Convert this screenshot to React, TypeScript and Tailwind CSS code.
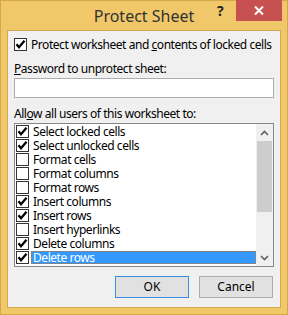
const items: [string, boolean][] = [
  ["Select locked cells", true],
  ["Select unlocked cells", true],
  ["Format cells", false],
  ["Format columns", false],
  ["Format rows", false],
  ["Insert columns", true],
  ["Insert rows", true],
  ["Insert hyperlinks", false],
  ["Delete columns", true],
  ["Delete rows", true],
];

function Check({ checked }: { checked: boolean }) {
  return (
    <span className="flex h-[13px] w-[13px] shrink-0 items-center justify-center border border-[#333333] bg-white">
      {checked ? (
        <svg width="11" height="11" viewBox="0 0 11 11">
          <path d="M1.5 5.3 L4 8.3 L9.5 1.8" fill="none" stroke="#000" strokeWidth="2.3" />
        </svg>
      ) : null}
    </span>
  );
}

function Chevron({ up }: { up?: boolean }) {
  return (
    <svg width="9" height="6" viewBox="0 0 9 6">
      <path
        d={up ? "M1 5 L4.5 1.5 L8 5" : "M1 1 L4.5 4.5 L8 1"}
        fill="none"
        stroke="#606060"
        strokeWidth="1.6"
      />
    </svg>
  );
}

export default function App() {
  return (
    <div className="flex h-[315px] w-[288px] flex-col border border-[#d6a747] bg-[#f0c86a] font-['Segoe_UI','Noto_Sans',sans-serif] text-[12px] tracking-[-0.45px] text-black">
      <div className="relative flex h-[29px] shrink-0 items-center justify-center">
        <span className="text-[16px] leading-none tracking-normal text-[#333333]">Protect Sheet</span>
        <span className="absolute left-[216px] top-[3px] text-[14px] font-bold leading-[14px] text-[#222]">?</span>
        <div className="absolute right-[5px] top-[-1px] flex h-[21px] w-[46px] items-center justify-center bg-[#c75050]">
          <svg width="10" height="9" viewBox="0 0 10 9">
            <path d="M1 0.5 L9 8.5 M9 0.5 L1 8.5" stroke="#fff" strokeWidth="2" />
          </svg>
        </div>
      </div>
      <div className="mx-[6px] mb-[6px] flex flex-1 flex-col border border-[#d3a950] bg-[#f0f0f0] pl-[6px] pr-[6px]">
        <div className="mt-[7px] flex h-[13px] items-center gap-[4px]">
          <Check checked />
          <span className="whitespace-nowrap leading-[15px]">
            Protect worksheet and <u>c</u>ontents of locked cells
          </span>
        </div>
        <div className="mt-[10px] whitespace-nowrap leading-[15px]">
          <u>P</u>assword to unprotect sheet:
        </div>
        <div className="mt-[2px] h-[20px] w-[260px] border border-[#abadb3] bg-white" />
        <div className="mt-[8px] whitespace-nowrap leading-[15px]">
          All<u>o</u>w all users of this worksheet to:
        </div>
        <div className="mt-[2px] flex h-[144px] w-[260px] border border-[#828790] bg-white">
          <div className="flex flex-1 flex-col gap-[1px] pl-[1px] pt-[1px]">
            {items.map(([label, checked], i) => {
              const selected = i === items.length - 1;
              return (
                <div key={label} className="flex h-[13px] items-center gap-[2px]">
                  <Check checked={checked} />
                  <span
                    className={
                      selected
                        ? "flex h-[13px] flex-1 items-center whitespace-nowrap border border-dotted border-[#c8701e] bg-[#3399ff] pl-[1px] leading-[13px] text-white"
                        : "flex h-[13px] flex-1 items-center whitespace-nowrap pl-[2px] leading-[13px]"
                    }
                  >
                    {label}
                  </span>
                </div>
              );
            })}
          </div>
          <div className="flex w-[17px] flex-col bg-[#f0f0f0]">
            <div className="flex h-[17px] items-center justify-center">
              <Chevron up />
            </div>
            <div className="mx-[1px] h-[71px] bg-[#cdcdcd]" />
            <div className="flex-1" />
            <div className="flex h-[17px] items-center justify-center">
              <Chevron />
            </div>
          </div>
        </div>
        <div className="mt-[9px] flex justify-end gap-[10px] pr-[1px]">
          <button className="h-[22px] w-[74px] border border-[#3c8ee4] bg-[#e1e1e1] leading-none tracking-normal">OK</button>
          <button className="h-[22px] w-[74px] border border-[#adadad] bg-[#e1e1e1] leading-none tracking-normal">Cancel</button>
        </div>
      </div>
    </div>
  );
}
